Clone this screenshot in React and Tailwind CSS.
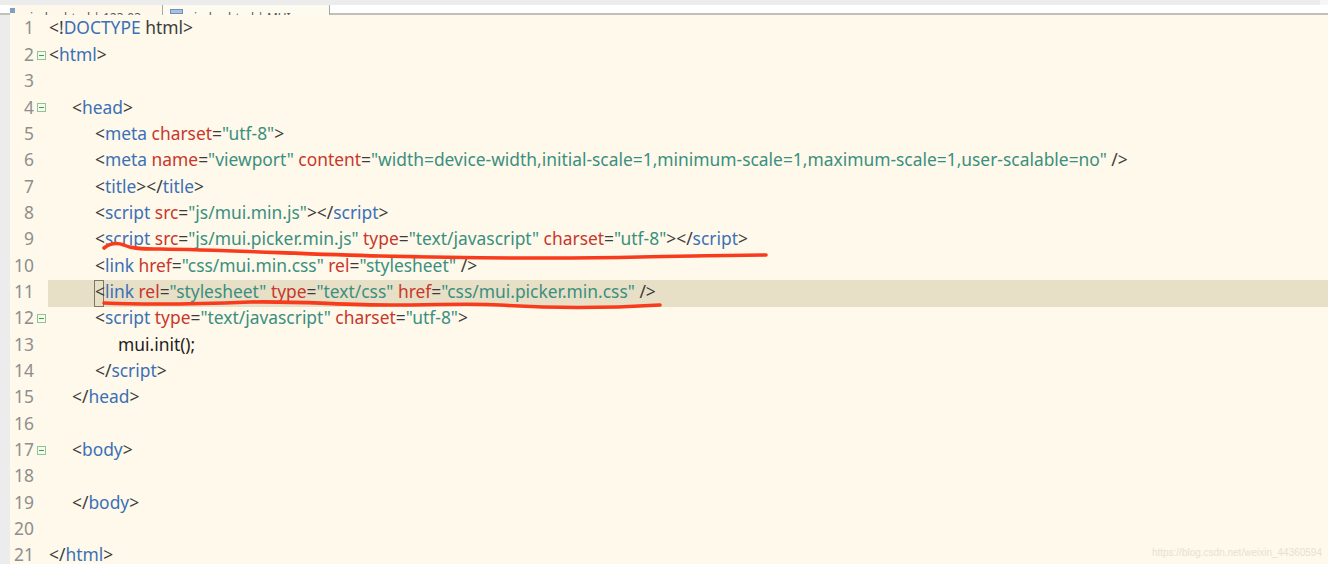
import React from "react";

const C = {
  p: "text-[#3c3c3c]",
  t: "text-[#3b70b6]",
  a: "text-[#c9362c]",
  v: "text-[#3a8f80]",
  x: "text-[#1e1e1e]",
};

const lines = [
  { n: 1, i: 0, tk: [["p", "<!"], ["t", "DOCTYPE"], ["p", " html>"]] },
  { n: 2, i: 0, f: true, tk: [["p", "<"], ["t", "html"], ["p", ">"]] },
  { n: 3, i: 0, tk: [] },
  { n: 4, i: 1, f: true, tk: [["p", "<"], ["t", "head"], ["p", ">"]] },
  { n: 5, i: 2, tk: [["p", "<"], ["t", "meta "], ["a", "charset"], ["p", "="], ["v", "\"utf-8\""], ["p", ">"]] },
  {
    n: 6,
    i: 2,
    tk: [
      ["p", "<"], ["t", "meta "], ["a", "name"], ["p", "="], ["v", "\"viewport\" "], ["a", "content"], ["p", "="],
      ["v", "\"width=device-width,initial-scale=1,minimum-scale=1,maximum-scale=1,user-scalable=no\""], ["p", " />"],
    ],
  },
  { n: 7, i: 2, tk: [["p", "<"], ["t", "title"], ["p", "></"], ["t", "title"], ["p", ">"]] },
  { n: 8, i: 2, tk: [["p", "<"], ["t", "script "], ["a", "src"], ["p", "="], ["v", "\"js/mui.min.js\""], ["p", "></"], ["t", "script"], ["p", ">"]] },
  {
    n: 9,
    i: 2,
    tk: [
      ["p", "<"], ["t", "script "], ["a", "src"], ["p", "="], ["v", "\"js/mui.picker.min.js\" "], ["a", "type"], ["p", "="],
      ["v", "\"text/javascript\" "], ["a", "charset"], ["p", "="], ["v", "\"utf-8\""], ["p", "></"], ["t", "script"], ["p", ">"],
    ],
  },
  {
    n: 10,
    i: 2,
    tk: [["p", "<"], ["t", "link "], ["a", "href"], ["p", "="], ["v", "\"css/mui.min.css\" "], ["a", "rel"], ["p", "="], ["v", "\"stylesheet\""], ["p", " />"]],
  },
  {
    n: 11,
    i: 2,
    hl: true,
    tk: [
      ["p", "<"], ["t", "link "], ["a", "rel"], ["p", "="], ["v", "\"stylesheet\" "], ["a", "type"], ["p", "="], ["v", "\"text/css\" "],
      ["a", "href"], ["p", "="], ["v", "\"css/mui.picker.min.css\""], ["p", " />"],
    ],
  },
  {
    n: 12,
    i: 2,
    f: true,
    tk: [["p", "<"], ["t", "script "], ["a", "type"], ["p", "="], ["v", "\"text/javascript\" "], ["a", "charset"], ["p", "="], ["v", "\"utf-8\""], ["p", ">"]],
  },
  { n: 13, i: 3, tk: [["x", "mui.init();"]] },
  { n: 14, i: 2, tk: [["p", "</"], ["t", "script"], ["p", ">"]] },
  { n: 15, i: 1, tk: [["p", "</"], ["t", "head"], ["p", ">"]] },
  { n: 16, i: 0, tk: [] },
  { n: 17, i: 1, f: true, tk: [["p", "<"], ["t", "body"], ["p", ">"]] },
  { n: 18, i: 0, tk: [] },
  { n: 19, i: 1, tk: [["p", "</"], ["t", "body"], ["p", ">"]] },
  { n: 20, i: 0, tk: [] },
  { n: 21, i: 0, tk: [["p", "</"], ["t", "html"], ["p", ">"]] },
];

const indentCls = ["pl-[1px]", "pl-[24px]", "pl-[47px]", "pl-[70px]"];

function Fold() {
  return (
    <span className="w-[9px] h-[9px] border border-[#93c393] bg-[#f4fbef] flex items-center justify-center">
      <span className="w-[5px] h-px bg-[#4f9a4f]" />
    </span>
  );
}

function Line({ l }) {
  return (
    <div className="flex h-[26.35px] items-center">
      <div className="w-[24px] h-full flex items-center justify-end pb-[4px] text-[#8e8e8e]">{l.n}</div>
      <div className="w-[14px] h-full flex items-center justify-center pb-[3px]">{l.f ? <Fold /> : null}</div>
      <div className={"flex-1 h-full flex items-center pb-[4px] relative " + (l.hl ? "bg-[#e7dfc6] " : "") + indentCls[l.i]}>
        {l.hl ? (
          <span className="absolute left-[46px] top-0 w-[10px] h-full border border-[#7d7766]" />
        ) : null}
        <span className="whitespace-pre relative">
          {l.tk.map(([k, s], j) => (
            <span key={j} className={C[k]}>
              {s}
            </span>
          ))}
        </span>
      </div>
    </div>
  );
}

export default function App() {
  return (
    <div className="relative w-[1328px] h-[564px] overflow-hidden bg-[#ececec] flex flex-col font-['Noto_Sans',sans-serif]">
      {/* top bar */}
      <div className="h-[5px] shrink-0 flex">
        <div className="flex-1" />
        <div className="w-[8px] bg-[#f6f6f6]" />
      </div>
      {/* tab strip */}
      <div className="h-[10px] shrink-0 flex pl-[10px] bg-white border-b-2 border-[#c2c0b8] text-[12px] leading-none text-[#555]">
        <div className="w-[152px] h-[10px] bg-[#fdf8ea] flex items-end overflow-hidden relative">
          <span className="w-[5px] h-[5px] bg-[#7d9ec8] mb-[2px] ml-0" />
          <span className="ml-[15px] whitespace-pre mb-[-9px]">index.html | 123-03</span>
        </div>
        <div className="w-[168px] h-[10px] bg-[#fdfaf0] border-x border-[#a8a8a8] flex items-end overflow-hidden">
          <span className="w-[13px] h-[5px] bg-[#a9c1df] border border-[#6f90bb] ml-[7px] mb-[1px]" />
          <span className="ml-[11px] whitespace-pre mb-[-9px]">index.html | MUI</span>
        </div>
        <div className="flex-1" />
      </div>
      {/* editor */}
      <div className="flex-1 flex">
        <div className="w-[10px] shrink-0 bg-[#ececec]" />
        <div className="flex-1 bg-[#fef9ea] pt-[2px] text-[17.4px] leading-none">
          {lines.map((l) => (
            <Line key={l.n} l={l} />
          ))}
        </div>
      </div>
      {/* hand-drawn underlines */}
      <svg className="absolute left-0 top-0 pointer-events-none" width="1328" height="564" viewBox="0 0 1328 564">
        <path
          d="M104,248 C109,244 116,242 124,245 C130,248 138,249 160,249 C230,250 300,254 380,256 C470,258 560,259 640,257 C700,256 740,255 766,255"
          fill="none"
          stroke="#f73b1c"
          strokeWidth="3.6"
          strokeLinecap="round"
        />
        <path
          d="M104,303 C150,305 200,304 250,302 C300,301 340,305 390,305 C440,305 470,303 500,305 C560,309 610,308 660,305"
          fill="none"
          stroke="#f73b1c"
          strokeWidth="3.6"
          strokeLinecap="round"
        />
      </svg>
      <div className="absolute right-[6px] bottom-[4px] text-[10px] text-[#e6e1d2] font-['Liberation_Sans',sans-serif]">
        https://blog.csdn.net/weixin_44360594
      </div>
    </div>
  );
}
